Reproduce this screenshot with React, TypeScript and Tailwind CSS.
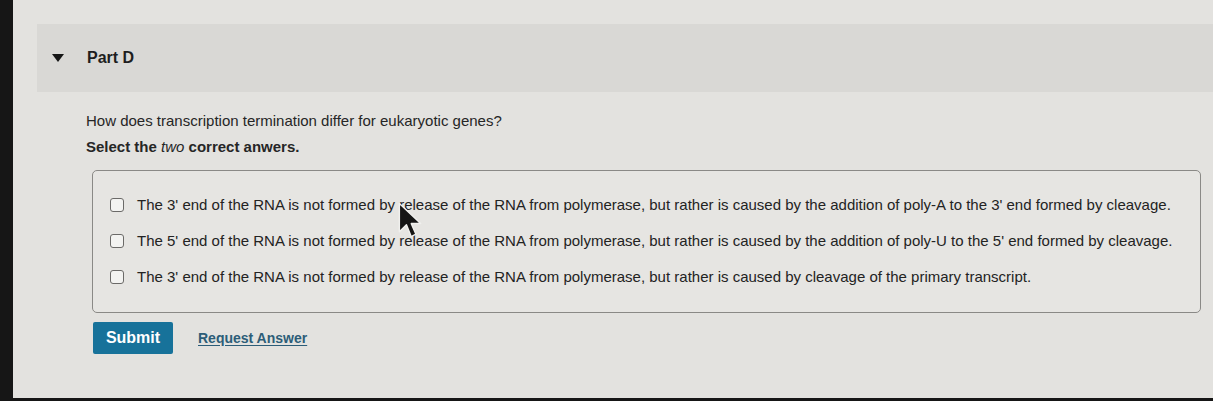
import React from "react";

const options = [
  "The 3' end of the RNA is not formed by release of the RNA from polymerase, but rather is caused by the addition of poly-A to the 3' end formed by cleavage.",
  "The 5' end of the RNA is not formed by release of the RNA from polymerase, but rather is caused by the addition of poly-U to the 5' end formed by cleavage.",
  "The 3' end of the RNA is not formed by release of the RNA from polymerase, but rather is caused by cleavage of the primary transcript.",
];

function Cursor() {
  return (
    <svg
      className="pointer-events-none absolute left-[397px] top-[201px]"
      width="26"
      height="38"
      viewBox="0 0 22 32"
    >
      <path
        d="M2 2 L2 26 L8 20 L12 30 L16 28 L12 19 L20 19 Z"
        fill="#151515"
        stroke="#f0f0ee"
        strokeWidth="1.2"
        strokeLinejoin="round"
      />
    </svg>
  );
}

export default function App() {
  return (
    <div
      className="relative flex h-[401px] w-[1213px] overflow-hidden bg-[#161616] text-[#262626]"
      style={{ fontFamily: "'Liberation Sans', Arial, sans-serif" }}
    >
      {/* Dark bezel on the left */}
      <div className="w-[13px] shrink-0" />

      <div className="flex flex-1 flex-col pb-[3px]">
        <div className="flex h-[398px] flex-col bg-[#e3e2df]">
          {/* Part header */}
          <div className="mt-[24px] ml-[24px] flex h-[68px] items-center bg-[#d9d8d5]">
            <svg className="ml-[15px] mr-[23px]" width="12" height="8" viewBox="0 0 12 8">
              <path d="M0 0 H12 L6 8 Z" fill="#161616" />
            </svg>
            <span className="text-[16px] font-semibold text-[#1e1e1e]">Part D</span>
          </div>

          <div className="ml-[73px] mt-[19px] flex flex-col">
            <p className="text-[15px] leading-[20px]">
              How does transcription termination differ for eukaryotic genes?
            </p>
            <p className="mt-[6px] text-[15px] font-bold leading-[20px]">
              Select the <span className="font-normal italic">two</span> correct anwers.
            </p>
          </div>

          {/* Answers box */}
          <div className="ml-[79px] mr-[12px] mt-[13px] flex flex-col gap-[17px] rounded-[5px] border border-[#8a8986] bg-[#e6e5e2] pl-[17px] pr-[10px] pt-[24px] pb-[26px]">
            {options.map((o) => (
              <label key={o} className="flex items-center gap-[13px] text-[15px] leading-[19px] text-[#232323]">
                <span className="h-[14px] w-[14px] shrink-0 rounded-[3px] border-[1.5px] border-[#6b6a68] bg-[#f3f3f1]" />
                <span>{o}</span>
              </label>
            ))}
          </div>

          {/* Actions */}
          <div className="ml-[80px] mt-[9px] flex items-center gap-[25px]">
            <button className="h-[32px] w-[80px] rounded-[2px] bg-[#17729a] text-[16px] font-bold text-white">
              Submit
            </button>
            <a className="text-[14px] font-bold text-[#2c5d78] underline underline-offset-2">
              Request Answer
            </a>
          </div>
        </div>
      </div>

      <Cursor />
    </div>
  );
}
